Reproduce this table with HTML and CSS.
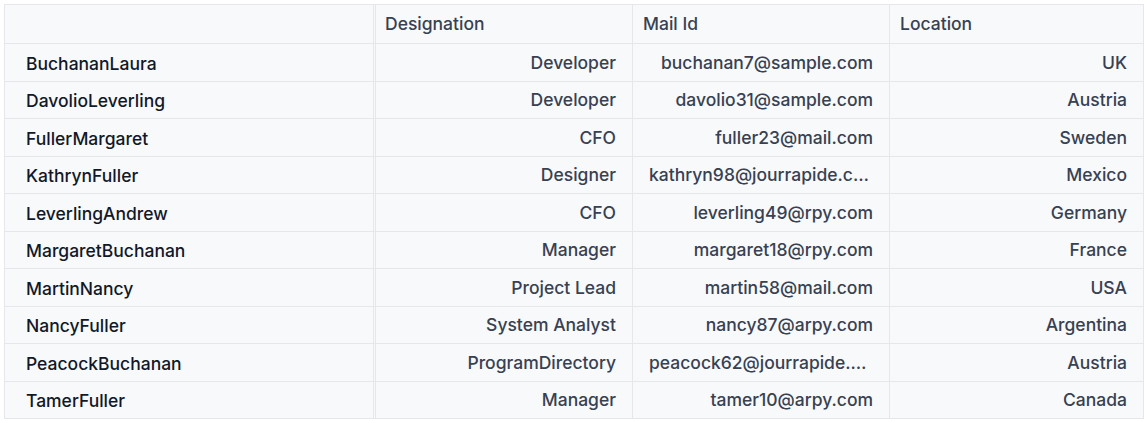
FILE: index.html
```html
<!DOCTYPE html>
<html>
<head>
<meta charset="utf-8">
<link rel="stylesheet" href="styles.css">
</head>
<body>
<div class="grid">
  <div class="cell head frozen"></div>
  <div class="cell head">Designation</div>
  <div class="cell head">Mail Id</div>
  <div class="cell head">Location</div>

  <div class="cell frozen">BuchananLaura</div><div class="cell num">Developer</div><div class="cell num"><span class="ell">buchanan7@sample.com</span></div><div class="cell num">UK</div>
  <div class="cell frozen">DavolioLeverling</div><div class="cell num">Developer</div><div class="cell num"><span class="ell">davolio31@sample.com</span></div><div class="cell num">Austria</div>
  <div class="cell frozen">FullerMargaret</div><div class="cell num">CFO</div><div class="cell num"><span class="ell">fuller23@mail.com</span></div><div class="cell num">Sweden</div>
  <div class="cell frozen">KathrynFuller</div><div class="cell num">Designer</div><div class="cell num"><span class="ell">kathryn98@jourrapide.com</span></div><div class="cell num">Mexico</div>
  <div class="cell frozen">LeverlingAndrew</div><div class="cell num">CFO</div><div class="cell num"><span class="ell">leverling49@rpy.com</span></div><div class="cell num">Germany</div>
  <div class="cell frozen">MargaretBuchanan</div><div class="cell num">Manager</div><div class="cell num"><span class="ell">margaret18@rpy.com</span></div><div class="cell num">France</div>
  <div class="cell frozen">MartinNancy</div><div class="cell num">Project Lead</div><div class="cell num"><span class="ell">martin58@mail.com</span></div><div class="cell num">USA</div>
  <div class="cell frozen">NancyFuller</div><div class="cell num">System Analyst</div><div class="cell num"><span class="ell">nancy87@arpy.com</span></div><div class="cell num">Argentina</div>
  <div class="cell frozen">PeacockBuchanan</div><div class="cell num">ProgramDirectory</div><div class="cell num"><span class="ell">peacock62@jourrapide.com</span></div><div class="cell num">Austria</div>
  <div class="cell frozen">TamerFuller</div><div class="cell num">Manager</div><div class="cell num"><span class="ell">tamer10@arpy.com</span></div><div class="cell num">Canada</div>
</div>
</body>
</html>
```

FILE: styles.css
```css
html, body {
  margin: 0;
  padding: 0;
  background: #ffffff;
}

body {
  padding: 4px;
  font-family: Inter, "Noto Sans", sans-serif;
}

.grid {
  display: grid;
  width: 1140px;
  box-sizing: border-box;
  grid-template-columns: 371px 257px 257px 254px;
  grid-template-rows: 39px repeat(10, 37.5px);
  background: #f8f9fb;
  border-left: 1px solid #e5e7eb;
  border-top: 1px solid #e5e7eb;
}

.cell {
  box-sizing: border-box;
  display: flex;
  align-items: center;
  min-width: 0;
  overflow: hidden;
  white-space: nowrap;
  border-right: 1px solid #e5e7eb;
  border-bottom: 1px solid #e5e7eb;
  font-size: 17.5px;
  font-weight: 500;
  color: #374151;
  padding: 0 16px;
}

.cell.head {
  padding: 0 10px 1px 10px;
  justify-content: flex-start;
}

.cell.head:nth-child(2) {
  padding-left: 9px;
}

.cell.num {
  justify-content: flex-end;
}

.cell.frozen {
  border-right: 3px double #e5e7eb;
  padding-left: 21px;
  padding-top: 2px;
  color: #111827;
}

.ell {
  display: block;
  min-width: 0;
  overflow: hidden;
  text-overflow: ellipsis;
}
```
